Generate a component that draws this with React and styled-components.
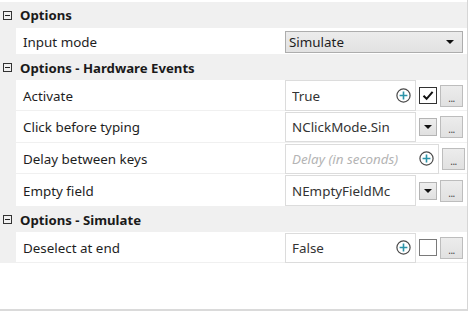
import React from "react";
import styled, { createGlobalStyle } from "styled-components";

const Global = createGlobalStyle`
  html, body { margin: 0; padding: 0; background: #ffffff; }
  body { font-family: "Noto Sans", "Open Sans", sans-serif; }
`;

const Panel = styled.div`
  width: 467px;
  height: 307px;
  padding-top: 2px;
  background: #ffffff;
  border-right: 1px solid #d6d6d6;
  border-bottom: 2px solid #dadada;
  display: flex;
  flex-direction: column;
`;

const Category = styled.div`
  height: ${(p) => p.$h}px;
  background: #f0f0f0;
  display: flex;
  align-items: center;
  gap: 8px;
  padding-left: 3px;
  font-weight: 700;
  font-size: 13.2px;
  color: #1a1a1a;
  box-sizing: border-box;
`;

const Toggle = styled.span`
  width: 9px;
  height: 9px;
  border: 1px solid #333;
  box-sizing: border-box;
  position: relative;
  flex: none;
  &::after {
    content: "";
    position: absolute;
    left: 1px;
    right: 1px;
    top: 3px;
    height: 1px;
    background: #222;
  }
`;

const Row = styled.div`
  height: ${(p) => p.$h}px;
  display: grid;
  grid-template-columns: 269px 1fr;
  border-left: 16px solid #f0f0f0;
  background: #ffffff;
  box-shadow: inset 0 -1px 0 #f0f0f0;
  box-sizing: border-box;
`;

const Label = styled.div`
  display: flex;
  align-items: center;
  padding-left: 7px;
  font-size: 13.4px;
  color: #1e1e1e;
`;

const Editor = styled.div`
  display: flex;
  align-items: center;
  gap: 3px;
`;

const Field = styled.div`
  width: ${(p) => p.$w}px;
  height: ${(p) => p.$fh}px;
  box-sizing: border-box;
  border: 1px solid #dcdcdc;
  background: #fff;
  display: flex;
  align-items: center;
  padding: 0 4px 0 6px;
  gap: 4px;
  font-size: 13.4px;
  color: #333;
  overflow: hidden;
  white-space: nowrap;
`;

const FieldText = styled.span`
  flex: 1;
  overflow: hidden;
  white-space: nowrap;
  ${(p) => p.$placeholder && `font-style: italic; color: #b4b4b4;`}
`;

const Select = styled.div`
  width: 178px;
  height: 22px;
  box-sizing: border-box;
  border: 1px solid #adadad;
  background: linear-gradient(#ececec, #e2e2e2);
  display: flex;
  align-items: center;
  justify-content: space-between;
  padding: 0 8px 0 3px;
  font-size: 13.4px;
  color: #1e1e1e;
`;

const Arrow = styled.span`
  width: 0;
  height: 0;
  border-left: 4px solid transparent;
  border-right: 4px solid transparent;
  border-top: 4px solid #111;
`;

const SmallButton = styled.div`
  width: 18px;
  height: 18px;
  box-sizing: border-box;
  border: 1px solid #b4b4b4;
  background: linear-gradient(#eeeeee, #e0e0e0);
  display: flex;
  align-items: center;
  justify-content: center;
`;

const DotsButton = styled.div`
  width: 23px;
  height: 22px;
  box-sizing: border-box;
  border: 1px solid #bdbdbd;
  background: linear-gradient(#ececec, #e1e1e1);
  display: flex;
  align-items: flex-end;
  justify-content: center;
  padding-bottom: 3px;
  font-size: 10px;
  line-height: 10px;
  color: #444;
  letter-spacing: -0.5px;
`;

const Check = styled.div`
  width: 18px;
  height: 17px;
  box-sizing: border-box;
  border: 1px solid ${(p) => (p.$checked ? "#333" : "#7a7a7a")};
  background: #fff;
  display: flex;
  align-items: center;
  justify-content: center;
`;

const Plus = () => (
  <svg width="15" height="15" viewBox="0 0 15 15" style={{ flex: "none" }}>
    <circle cx="7.5" cy="7.5" r="6.6" fill="#fff" stroke="#4a4a4a" strokeWidth="1.2" />
    <path d="M7.5 3.6v7.8M3.6 7.5h7.8" stroke="#2b93a8" strokeWidth="1.6" />
  </svg>
);

const Tick = () => (
  <svg width="12" height="11" viewBox="0 0 12 11">
    <path d="M1.5 5.8 L4.6 8.8 L10.6 1.8" fill="none" stroke="#111" strokeWidth="2" />
  </svg>
);

export default function App() {
  return (
    <>
      <Global />
      <Panel>
        <Category $h={26}>
          <Toggle />
          Options
        </Category>
        <Row $h={27}>
          <Label>Input mode</Label>
          <Editor>
            <Select>
              <span>Simulate</span>
              <Arrow />
            </Select>
          </Editor>
        </Row>
        <Category $h={25}>
          <Toggle />
          Options - Hardware Events
        </Category>
        <Row $h={31}>
          <Label>Activate</Label>
          <Editor>
            <Field $w={131} $fh={31}>
              <FieldText>True</FieldText>
              <Plus />
            </Field>
            <Check $checked>
              <Tick />
            </Check>
            <DotsButton>...</DotsButton>
          </Editor>
        </Row>
        <Row $h={32}>
          <Label>Click before typing</Label>
          <Editor>
            <Field $w={131} $fh={30}>
              <FieldText>NClickMode.Sin</FieldText>
            </Field>
            <SmallButton>
              <Arrow />
            </SmallButton>
            <DotsButton>...</DotsButton>
          </Editor>
        </Row>
        <Row $h={31}>
          <Label>Delay between keys</Label>
          <Editor>
            <Field $w={154} $fh={30}>
              <FieldText $placeholder>Delay (in seconds)</FieldText>
              <Plus />
            </Field>
            <DotsButton>...</DotsButton>
          </Editor>
        </Row>
        <Row $h={33}>
          <Label>Empty field</Label>
          <Editor>
            <Field $w={131} $fh={31}>
              <FieldText>NEmptyFieldMc</FieldText>
            </Field>
            <SmallButton>
              <Arrow />
            </SmallButton>
            <DotsButton>...</DotsButton>
          </Editor>
        </Row>
        <Category $h={25}>
          <Toggle />
          Options - Simulate
        </Category>
        <Row $h={31}>
          <Label>Deselect at end</Label>
          <Editor>
            <Field $w={131} $fh={30}>
              <FieldText>False</FieldText>
              <Plus />
            </Field>
            <Check />
            <DotsButton>...</DotsButton>
          </Editor>
        </Row>
      </Panel>
    </>
  );
}
